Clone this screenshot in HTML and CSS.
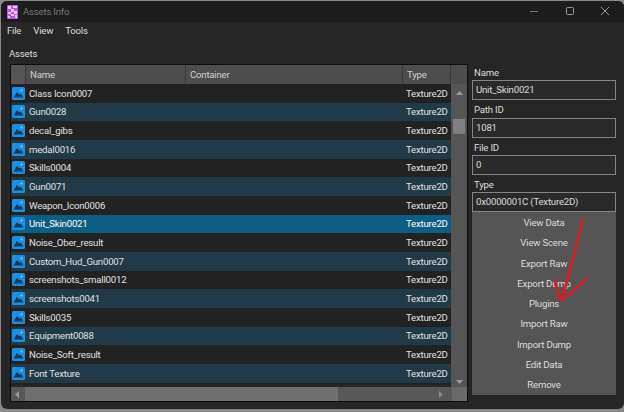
FILE: index.html
```html
<!DOCTYPE html>
<html lang="en">
<head>
<meta charset="utf-8">
<title>Assets Info</title>
<link rel="stylesheet" href="styles.css">
</head>
<body>
<svg width="0" height="0" class="defs"><defs>
<symbol id="pic" viewBox="0 0 13 13"><rect width="13" height="13" rx="1.5" fill="#1c8fe0"/><path d="M1.5 10.5 L5 5 L7.2 7.6 L8.6 6.4 L11.5 10.5 Z" fill="#0d3a5c"/><circle cx="9.5" cy="3.6" r="1" fill="#9fd4f5"/></symbol>
</defs></svg>
<div class="window">
  <header class="titlebar">
    <svg class="app-icon" width="11" height="14" viewBox="0 0 11 14"><rect width="11" height="14" rx="1" fill="#b45ce0"/><path d="M1 1h3v3H1zM6 1h4v2H6zM4 4h3v3H4zM1 7h3v2H1zM7 6h3v3H7zM4 9h3v2H4zM1 11h2v2H1zM8 10h2v3H8z" fill="#eec4f8"/></svg>
    <span class="title">Assets Info</span>
    <div class="controls">
      <svg width="10" height="10" viewBox="0 0 10 10"><path d="M1 5.5H9" stroke="#777" fill="none"/></svg>
      <svg width="10" height="10" viewBox="0 0 10 10"><rect x="1.5" y="1.5" width="7" height="7" rx="1" stroke="#999" fill="none"/></svg>
      <svg width="10" height="10" viewBox="0 0 10 10"><path d="M1 1L9 9M9 1L1 9" stroke="#999" fill="none"/></svg>
    </div>
  </header>
  <nav class="menubar"><span>File</span><span>View</span><span>Tools</span></nav>
  <div class="caption">Assets</div>
  <main class="content">
    <section class="table">
      <div class="table-body">
        <div class="columns">
          <div class="thead">
            <div class="th th-icon"></div>
            <div class="th th-name">Name</div>
            <div class="th th-container">Container</div>
            <div class="th th-type">Type</div>
          </div>
          <div class="rows">
            <div class="row"><svg class="ico"><use href="#pic"/></svg><span class="name">Class Icon0007</span><span class="type">Texture2D</span></div>
            <div class="row alt"><svg class="ico"><use href="#pic"/></svg><span class="name">Gun0028</span><span class="type">Texture2D</span></div>
            <div class="row"><svg class="ico"><use href="#pic"/></svg><span class="name">decal_gibs</span><span class="type">Texture2D</span></div>
            <div class="row alt"><svg class="ico"><use href="#pic"/></svg><span class="name">medal0016</span><span class="type">Texture2D</span></div>
            <div class="row"><svg class="ico"><use href="#pic"/></svg><span class="name">Skills0004</span><span class="type">Texture2D</span></div>
            <div class="row alt"><svg class="ico"><use href="#pic"/></svg><span class="name">Gun0071</span><span class="type">Texture2D</span></div>
            <div class="row"><svg class="ico"><use href="#pic"/></svg><span class="name">Weapon_Icon0006</span><span class="type">Texture2D</span></div>
            <div class="row selected"><svg class="ico"><use href="#pic"/></svg><span class="name">Unit_Skin0021</span><span class="type">Texture2D</span></div>
            <div class="row"><svg class="ico"><use href="#pic"/></svg><span class="name">Noise_Ober_result</span><span class="type">Texture2D</span></div>
            <div class="row alt"><svg class="ico"><use href="#pic"/></svg><span class="name">Custom_Hud_Gun0007</span><span class="type">Texture2D</span></div>
            <div class="row"><svg class="ico"><use href="#pic"/></svg><span class="name">screenshots_small0012</span><span class="type">Texture2D</span></div>
            <div class="row alt"><svg class="ico"><use href="#pic"/></svg><span class="name">screenshots0041</span><span class="type">Texture2D</span></div>
            <div class="row"><svg class="ico"><use href="#pic"/></svg><span class="name">Skills0035</span><span class="type">Texture2D</span></div>
            <div class="row alt"><svg class="ico"><use href="#pic"/></svg><span class="name">Equipment0088</span><span class="type">Texture2D</span></div>
            <div class="row"><svg class="ico"><use href="#pic"/></svg><span class="name">Noise_Soft_result</span><span class="type">Texture2D</span></div>
            <div class="row alt"><svg class="ico"><use href="#pic"/></svg><span class="name">Font Texture</span><span class="type">Texture2D</span></div>
            <div class="row"><svg class="ico"><use href="#pic"/></svg></div>
          </div>
        </div>
        <div class="vscroll">
          <div class="vhead"></div>
          <div class="vtrack">
            <svg class="arrow-up" width="7" height="4" viewBox="0 0 7 4"><path d="M0 4L3.5 0L7 4Z" fill="#9a9a9a"/></svg>
            <div class="vthumb"></div>
            <svg class="arrow-down" width="7" height="4" viewBox="0 0 7 4"><path d="M0 0L3.5 4L7 0Z" fill="#9a9a9a"/></svg>
          </div>
        </div>
      </div>
      <div class="hscroll">
        <svg class="h-left" width="4" height="7" viewBox="0 0 4 7"><path d="M4 0L0 3.5L4 7Z" fill="#9a9a9a"/></svg>
        <div class="hthumb"></div>
        <svg class="h-right" width="4" height="7" viewBox="0 0 4 7"><path d="M0 0L4 3.5L0 7Z" fill="#8a8a8a"/></svg>
        <div class="corner"></div>
      </div>
    </section>
    <aside class="side">
      <label class="field-label">Name</label>
      <div class="input">Unit_Skin0021</div>
      <label class="field-label">Path ID</label>
      <div class="input">1081</div>
      <label class="field-label">File ID</label>
      <div class="input">0</div>
      <label class="field-label">Type</label>
      <div class="input">0x0000001C (Texture2D)</div>
      <div class="buttons">
        <div class="btn">View Data</div>
        <div class="btn">View Scene</div>
        <div class="btn">Export Raw</div>
        <div class="btn">Export Dump</div>
        <div class="btn">Plugins</div>
        <div class="btn">Import Raw</div>
        <div class="btn">Import Dump</div>
        <div class="btn">Edit Data</div>
        <div class="btn">Remove</div>
      </div>
    </aside>
  </main>
</div>
<svg class="scribble" width="60" height="100" viewBox="0 0 60 100"><path d="M34 1 C31 17 26 35 19 60 L13 80 M6 63 C8 71 10 78 12 82 C20 78 30 68 38 61" fill="none" stroke="#d0202a" stroke-width="2.8" stroke-linecap="round" stroke-linejoin="round"/></svg>
</body>
</html>
```
FILE: styles.css
```css
* { box-sizing: border-box; }
html, body { margin: 0; padding: 0; }
body {
  width: 624px; height: 412px; overflow: hidden; position: relative;
  background: #8a8a8a;
  font-family: Roboto, "Noto Sans", sans-serif;
  font-size: 9.6px; letter-spacing: -0.2px; color: #dcdcdc;
  padding: 1px 0 0 1px;
}
.defs { position: absolute; }
.window {
  width: 623px; height: 408px; background: #262626;
  border-radius: 6px; overflow: hidden;
  display: flex; flex-direction: column;
}
.titlebar {
  height: 21px; background: #1d1d1d; display: flex; align-items: center;
  padding-left: 6px; flex: none;
}
.app-icon { display: block; flex: none; }
.title { margin-left: 5px; color: #777; }
.controls { margin-left: auto; display: flex; gap: 25.5px; padding: 0 14px 2px 0; align-items: center; }
.controls svg { display: block; }
.menubar { height: 17px; display: flex; gap: 12px; padding-left: 6px; align-items: center; flex: none; }
.caption { height: 25px; padding: 5px 0 0 8px; line-height: 19px; flex: none; }
.content { display: flex; align-items: flex-start; padding-left: 9px; gap: 4px; }
.table {
  width: 458px; height: 338px; background: #262626; border: 1px solid #0c0c0c;
  display: flex; flex-direction: column;
}
.table-body { display: flex; height: 322px; }
.columns { width: 440px; overflow: hidden; }
.thead { display: flex; height: 19px; background: #4d4d4d; }
.th { line-height: 19px; padding-left: 4px; border-right: 1px solid #3a3a3a; color: #d0d0d0; }
.th-icon { width: 15px; background: #555; }
.th-name { width: 160px; }
.th-container { width: 217px; }
.th-type { width: 48px; }
.rows { height: 301px; overflow: hidden; }
.row {
  height: 18.67px; display: flex; align-items: center; background: #222;
  color: #e0e0e0; padding-left: 1px;
}
.row.alt { background: #213a47; }
.row.selected { background: #0b5e86; color: #fff; }
.ico { width: 13px; height: 13px; flex: none; }
.name { margin-left: 4px; width: 377px; white-space: nowrap; }
.type { white-space: nowrap; }
.vscroll { width: 16px; background: #555; display: flex; flex-direction: column; margin-left: auto; }
.vhead { height: 19px; background: #4d4d4d; }
.vtrack { position: relative; flex: 1; display: flex; flex-direction: column; align-items: center; padding-top: 7px; }
.vthumb { width: 12px; height: 15px; background: #808080; margin-top: 24px; }
.arrow-down { margin-top: auto; margin-bottom: 3px; }
.hscroll { height: 14px; flex: none; display: flex; align-items: center; background: #585858; padding-left: 4px; }
.hthumb { width: 313px; height: 14px; margin-left: 6px; background: #6e6e6e; }
.h-right { margin-left: auto; }
.corner { margin-left: 9px; width: 15px; height: 14px; background: #6a6a6a; }
.side { width: 144px; display: flex; flex-direction: column; margin-top: 1px; }
.field-label { height: 15.3px; line-height: 16px; padding-left: 2px; flex: none; }
.input {
  height: 20px; border: 1px solid #858585; background: #2a2a2a; line-height: 18px;
  padding-left: 3px; margin-bottom: 2px; flex: none;
}
.buttons { background: #555; margin-top: -2px; padding-top: 1px; height: 183px; display: flex; flex-direction: column; }
.btn { height: 20.25px; line-height: 20px; text-align: center; flex: none; }
.scribble { position: absolute; left: 549px; top: 218px; }
```
